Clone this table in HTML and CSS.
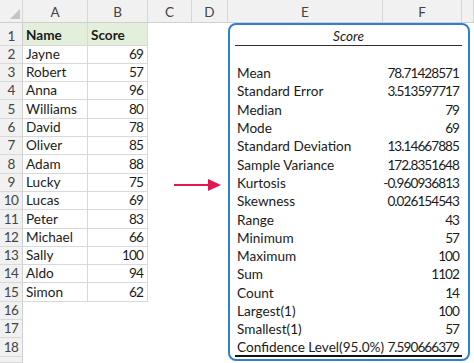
FILE: index.html
```html
<!DOCTYPE html>
<html lang="en">
<head>
    <meta charset="UTF-8">
    <title>Score - Descriptive Statistics</title>
    <link rel="stylesheet" href="styles.css">
</head>
<body>
    <div class="sheet">
        <!-- column headers -->
        <div class="corner"><span class="corner-mark"></span></div>
        <div class="col-head">A</div>
        <div class="col-head">B</div>
        <div class="col-head">C</div>
        <div class="col-head">D</div>
        <div class="col-head">E</div>
        <div class="col-head">F</div>
        <div class="col-head"></div>

        <!-- summary box covering E1:F18 -->
        <div class="stats">
            <div class="stats-title">Score</div>
            <div class="stats-row"></div>
            <div class="stats-row"><span>Mean</span><span class="val">78.71428571</span></div>
            <div class="stats-row"><span>Standard Error</span><span class="val">3.513597717</span></div>
            <div class="stats-row"><span>Median</span><span class="val">79</span></div>
            <div class="stats-row"><span>Mode</span><span class="val">69</span></div>
            <div class="stats-row"><span>Standard Deviation</span><span class="val">13.14667885</span></div>
            <div class="stats-row"><span>Sample Variance</span><span class="val">172.8351648</span></div>
            <div class="stats-row"><span>Kurtosis</span><span class="val">-0.960936813</span></div>
            <div class="stats-row"><span>Skewness</span><span class="val">0.026154543</span></div>
            <div class="stats-row"><span>Range</span><span class="val">43</span></div>
            <div class="stats-row"><span>Minimum</span><span class="val">57</span></div>
            <div class="stats-row"><span>Maximum</span><span class="val">100</span></div>
            <div class="stats-row"><span>Sum</span><span class="val">1102</span></div>
            <div class="stats-row"><span>Count</span><span class="val">14</span></div>
            <div class="stats-row"><span>Largest(1)</span><span class="val">100</span></div>
            <div class="stats-row"><span>Smallest(1)</span><span class="val">57</span></div>
            <div class="stats-row stats-last"><span>Confidence Level(95.0%)</span><span class="val">7.590666379</span></div>
        </div>

        <div class="rh">1</div><div class="cell head-cell">Name</div><div class="cell head-cell">Score</div><div></div><div></div>
        <div class="rh">2</div><div class="cell">Jayne</div><div class="cell num">69</div><div></div><div></div>
        <div class="rh">3</div><div class="cell">Robert</div><div class="cell num">57</div><div></div><div></div>
        <div class="rh">4</div><div class="cell">Anna</div><div class="cell num">96</div><div></div><div></div>
        <div class="rh">5</div><div class="cell">Williams</div><div class="cell num">80</div><div></div><div></div>
        <div class="rh">6</div><div class="cell">David</div><div class="cell num">78</div><div></div><div></div>
        <div class="rh">7</div><div class="cell">Oliver</div><div class="cell num">85</div><div></div><div></div>
        <div class="rh">8</div><div class="cell">Adam</div><div class="cell num">88</div><div></div><div></div>
        <div class="rh">9</div><div class="cell">Lucky</div><div class="cell num">75</div>
        <div class="arrow-cell">
            <svg width="47" height="14" viewBox="0 0 47 14">
                <line x1="0" y1="7" x2="36" y2="7" stroke="#e3174f" stroke-width="2"/>
                <polygon points="34,1 47,7 34,13" fill="#e3174f"/>
            </svg>
        </div>
        <div class="rh">10</div><div class="cell">Lucas</div><div class="cell num">69</div><div></div><div></div>
        <div class="rh">11</div><div class="cell">Peter</div><div class="cell num">83</div><div></div><div></div>
        <div class="rh">12</div><div class="cell">Michael</div><div class="cell num">66</div><div></div><div></div>
        <div class="rh">13</div><div class="cell">Sally</div><div class="cell num">100</div><div></div><div></div>
        <div class="rh">14</div><div class="cell">Aldo</div><div class="cell num">94</div><div></div><div></div>
        <div class="rh">15</div><div class="cell">Simon</div><div class="cell num">62</div><div></div><div></div>
        <div class="rh">16</div><div></div><div></div><div></div><div></div>
        <div class="rh">17</div><div></div><div></div><div></div><div></div>
        <div class="rh">18</div><div></div><div></div><div></div><div></div>
        <div class="rh"></div>
    </div>
</body>
</html>
```

FILE: styles.css
```css
* {
    box-sizing: border-box;
    margin: 0;
    padding: 0;
}

body {
    font-family: 'Lato', 'Liberation Sans', sans-serif;
    font-size: 13.6px;
    color: #1b1b1b;
    background-color: #fff;
    overflow: hidden;
}

.sheet {
    display: grid;
    grid-template-columns: 23px 65px 60px 44px 36px 155px 79px 1fr;
    grid-template-rows: 23px 22.6px repeat(17, 18.3px) 1fr;
    width: 474px;
    height: 363px;
}

/* headers */
.corner,
.col-head {
    background-color: #f1f1f1;
    border-right: 1px solid #d6d6d6;
    border-bottom: 1px solid #cfcfcf;
}

.corner {
    position: relative;
}

.corner-mark {
    position: absolute;
    left: 10px;
    top: 9px;
    width: 0;
    height: 0;
    border-left: 10px solid transparent;
    border-bottom: 10px solid #c4c4c4;
}

.col-head {
    display: flex;
    justify-content: center;
    align-items: center;
    color: #444;
    font-size: 13.5px;
    padding-top: 1px;
}

.col-head:last-of-type {
    border-right: none;
}

.rh {
    background-color: #f1f1f1;
    border-right: 1px solid #cfcfcf;
    border-bottom: 1px solid #d9d9d9;
    display: flex;
    justify-content: center;
    align-items: flex-end;
    color: #444;
    font-size: 13.5px;
    letter-spacing: -0.6px;
    line-height: 17px;
    overflow: hidden;
}

/* data cells */
.cell {
    border-right: 1px solid #d9d9d9;
    border-bottom: 1px solid #d9d9d9;
    display: flex;
    align-items: flex-end;
    padding: 0 3px 0;
    line-height: 17px;
    white-space: nowrap;
}

.num {
    justify-content: flex-end;
    letter-spacing: -0.9px;
    padding-right: 4px;
}

.head-cell {
    background-color: #e3efdb;
    font-weight: 700;
    padding-bottom: 1px;
}

.arrow-cell {
    grid-column: span 2;
    display: flex;
    align-items: center;
    padding-left: 26px;
    padding-top: 5px;
}

/* statistics box */
.stats {
    grid-column: 6 / 9;
    grid-row: 2 / 20;
    margin-right: 4px;
    margin-bottom: -4px;
    border: 2px solid #2f7fd1;
    border-radius: 8px;
    padding-bottom: 2px;
    background-color: #fff;
    display: grid;
    grid-template-columns: minmax(0, 1fr);
    grid-template-rows: 20.6px repeat(17, 18.3px);
}

.stats-title {
    margin: 0 6px 0 5px;
    border-bottom: 1px solid #333;
    font-style: italic;
    display: flex;
    justify-content: center;
    align-items: flex-end;
    line-height: 18px;
}

.stats-row {
    margin: 0 6px 0 5px;
    padding: 0 2px;
    display: flex;
    justify-content: space-between;
    align-items: flex-end;
    line-height: 17px;
    white-space: nowrap;
}

.stats-row .val {
    letter-spacing: -0.95px;
    margin-right: 1px;
}

.stats-last {
    border-bottom: 2px solid #111;
    line-height: 16px;
}
```
